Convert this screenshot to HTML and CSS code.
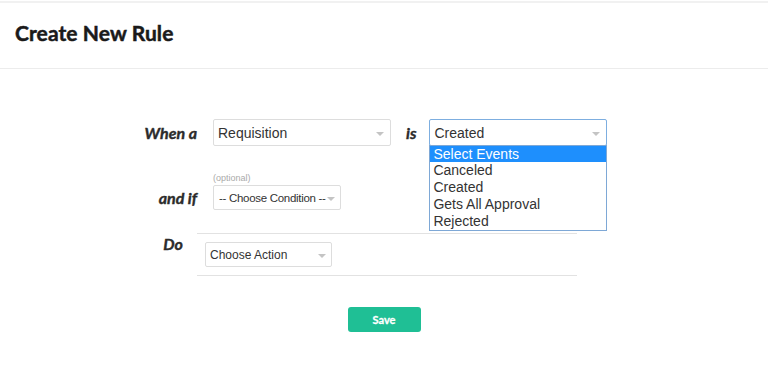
FILE: index.html
```html
<!DOCTYPE html>
<html lang="en">
<head>
    <meta charset="UTF-8">
    <meta name="viewport" content="width=device-width, initial-scale=1.0">
    <title>Create New Rule</title>
    <link rel="stylesheet" href="styles.css">
</head>
<body>

<div class="header">
    <h1>Create New Rule</h1>
</div>

<div class="rule-form">
    <div class="row">
        <span class="label">When a</span>
        <div class="select wide"><span>Requisition</span><i class="arrow"></i></div>
        <span class="label is">is</span>
        <div class="select wide open">
            <span>Created</span><i class="arrow"></i>
            <!-- open list of the events select -->
            <ul class="options">
                <li class="active">Select Events</li>
                <li>Canceled</li>
                <li>Created</li>
                <li>Gets All Approval</li>
                <li>Rejected</li>
            </ul>
        </div>
    </div>

    <div class="optional">(optional)</div>
    <div class="row">
        <span class="label">and if</span>
        <div class="select small"><span>-- Choose Condition --</span><i class="arrow"></i></div>
    </div>

    <div class="row do-row">
        <span class="label do">Do</span>
        <div class="actions">
            <div class="select small action"><span>Choose Action</span><i class="arrow"></i></div>
        </div>
    </div>
</div>

<button class="save">Save</button>

</body>
</html>
```

FILE: styles.css
```css
body { margin: 0; padding-top: 1px; font-family: "Liberation Sans", Arial, sans-serif; color: #333; background: #fff; }

/* Header */
.header { border-top: 2px solid #f1f1f1; border-bottom: 1px solid #ececec; padding: 15px 15px 21px; }
.header h1 { margin: 0; font-family: Lato, sans-serif; font-size: 21px; font-weight: 700; color: #1a1a1a; line-height: 29px; -webkit-text-stroke: 0.5px #1a1a1a; letter-spacing: 0.1px; }

/* Form rows */
.rule-form { padding-left: 136px; margin-top: 50px; }
.row { display: flex; align-items: center; }
.label { width: 61px; margin-right: 16px; text-align: right; font-family: Lato, sans-serif; font-style: italic; font-weight: 700; font-size: 16px; color: #2b2b2b; -webkit-text-stroke: 0.4px #2b2b2b; flex-shrink: 0; }
.label.is { width: auto; margin: 0 13px 0 15px; }
.optional { margin: 27px 0 1px 77px; font-size: 9px; line-height: 11px; color: #aaa; }

/* Fake selects */
.select { position: relative; box-sizing: border-box; border: 1px solid #ddd; border-radius: 2px; background: #fff; display: flex; align-items: center; padding-left: 4px; white-space: nowrap; }
.select.wide { width: 178px; height: 27px; font-size: 14px; }
.select.small { width: 128px; height: 25px; font-size: 11.5px; padding-left: 5px; }
.select.small span { letter-spacing: -0.3px; }
.select.action { width: 127px; padding-left: 4px; font-size: 12px; }
.select.action span { letter-spacing: 0; }
.arrow { position: absolute; right: 6px; top: 50%; margin-top: -1px; border-left: 4px solid transparent; border-right: 4px solid transparent; border-top: 4px solid #c4c4c4; }
.select.small .arrow { right: 5px; }
.select.open { border-color: #7daee0; }

/* Open list */
.options { position: absolute; top: 100%; left: -1px; width: 178px; box-sizing: border-box; margin: 0; padding: 0; list-style: none; background: #fff; border: 1px solid #7ea8d6; font-size: 14px; z-index: 2; }
.options li { height: 17px; line-height: 17px; padding-left: 3px; color: #333; }
.options li.active { background: #1e8ffd; color: #fff; height: 16px; line-height: 16px; }

/* Do row */
.do-row { align-items: flex-start; margin-top: 23px; }
.label.do { width: 47px; margin: 1px 14px 0 0; }
.actions { width: 380px; border-top: 1px solid #e2e2e2; border-bottom: 1px solid #e2e2e2; padding: 8px; box-sizing: border-box; }

/* Save */
.save { display: block; margin: 31px auto 0; width: 73px; height: 25px; border: 0; border-radius: 3px; background: #1fbf95; color: #fff; font-family: Lato, sans-serif; font-weight: 700; font-size: 11px; -webkit-text-stroke: 0.3px #fff; }
```
